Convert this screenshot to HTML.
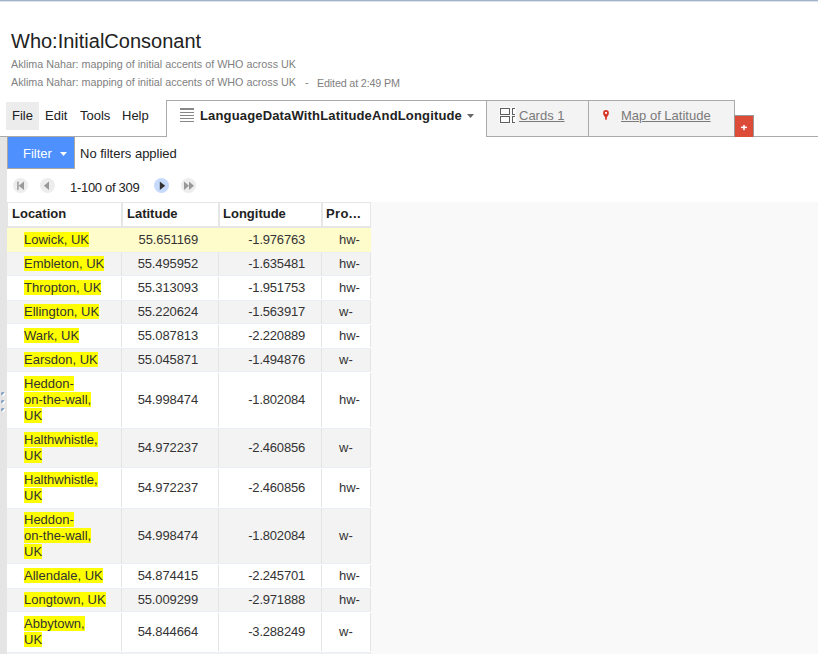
<!DOCTYPE html>
<html><head><meta charset="utf-8">
<style>
*{margin:0;padding:0;box-sizing:border-box}
html,body{width:818px;height:654px;overflow:hidden;background:#fff}
body{position:relative;font-family:"Liberation Sans",sans-serif;color:#222;font-size:13px}
.a{position:absolute;white-space:pre}
.topline{position:absolute;left:0;top:0;width:818px;height:2px;background:linear-gradient(#a3b4ca 0,#a3b4ca 1px,#dde3ea 1px)}
.title{left:11px;top:29px;font-size:20px;line-height:24px;color:#222}
.sub{left:11px;font-size:10.75px;line-height:14px;color:#7f7f7f}
.menu{top:102px;height:28px;line-height:28px;padding:0 6px;color:#222}
.tabline{position:absolute;left:0;top:136px;width:818px;height:1px;background:#aaa}
.tab{position:absolute;top:100px;height:37px;border:1px solid #aaa;background:#f3f3f3}
.lstrip{position:absolute;left:0;top:137px;width:7px;height:517px;background:#e5e5e5}
.filter{position:absolute;left:7px;top:137px;width:68px;height:32px;background:#4d90fe;border:1px solid #aca89f;border-top:none;border-radius:0 0 1px 1px}
.circ{position:absolute;top:177.5px;width:15px;height:15px;border-radius:50%;background:#ededed}
.grid{position:absolute;left:7px;top:202px;width:811px;height:452px;background:#f9f9f9}
.hdr{position:absolute;top:202px;height:26px;background:#fff;border-top:1px solid #e6e6e6;border-bottom:2px solid #e6e6e6}
.hc{position:absolute;top:0;height:23px;line-height:21px;font-weight:bold;color:#222;padding-left:4px;border-left:1px solid #e6e6e6;border-right:1px solid #e6e6e6}
.row{position:absolute;left:7px;width:364px}
.hl{position:absolute;left:0;right:0;height:1px;background:#e9eef7}
.c{position:absolute;top:0;bottom:0;color:#333;line-height:16px}
.bd{position:absolute;top:1px;bottom:1px;width:1px;background:#e4e4e4}
.loc{left:17px;width:96px}
.loc span{background:#ff0}
.lat{left:116px;width:95px;text-align:right;padding-right:20px;letter-spacing:-0.12px}
.lon{left:212px;width:102px;text-align:right;padding-right:16px;letter-spacing:-0.2px}
.pro{left:332px}
</style></head><body>
<div class="topline"></div>
<div class="a title">Who:InitialConsonant</div>
<div class="a sub" style="top:57px">Aklima Nahar: mapping of initial accents of WHO across UK</div>
<div class="a sub" style="top:75px">Aklima Nahar: mapping of initial accents of WHO across UK</div>
<div class="a sub" style="top:75px;left:305px">-</div>
<div class="a sub" style="top:75.5px;left:317px;letter-spacing:-0.16px">Edited at 2:49 PM</div>

<div class="a menu" style="left:6px;background:#ececec">File</div>
<div class="a menu" style="left:39px">Edit</div>
<div class="a menu" style="left:74px">Tools</div>
<div class="a menu" style="left:116px">Help</div>

<div class="tabline"></div>
<div class="tab" style="left:166px;width:321px;background:#fff;border-bottom:none"></div>
<svg class="a" style="left:180px;top:108px" width="14" height="14"><rect x="0" y="0" width="14" height="2" fill="#888"/><rect x="0" y="4" width="14" height="1" fill="#888"/><rect x="0" y="7" width="14" height="1" fill="#888"/><rect x="0" y="10" width="14" height="1" fill="#888"/><rect x="0" y="13" width="14" height="1" fill="#888"/></svg>
<div class="a" style="left:200px;top:108px;line-height:16px;font-weight:bold;color:#222;letter-spacing:0.16px">LanguageDataWithLatitudeAndLongitude</div>
<svg class="a" style="left:467px;top:114px" width="7" height="4"><path d="M0 0H7L3.5 4Z" fill="#666"/></svg>

<div class="tab" style="left:486px;width:103px"></div>
<svg class="a" style="left:499px;top:107px" width="17" height="17" shape-rendering="crispEdges"><g fill="#fafafa"><rect x="0" y="0" width="12" height="9"/><rect x="0" y="8" width="12" height="9"/><rect x="12" y="0" width="5" height="9"/><rect x="12" y="8" width="5" height="9"/><rect x="2" y="2" width="8" height="5" fill="#fff"/><rect x="2" y="10" width="8" height="5" fill="#fff"/><rect x="14" y="2" width="3" height="5" fill="#fff"/><rect x="14" y="10" width="3" height="5" fill="#fff"/></g><g fill="#5f5f5f"><rect x="1" y="1" width="10" height="1"/><rect x="1" y="7" width="10" height="1"/><rect x="1" y="1" width="1" height="7"/><rect x="10" y="1" width="1" height="7"/><rect x="1" y="9" width="10" height="1"/><rect x="1" y="15" width="10" height="1"/><rect x="1" y="9" width="1" height="7"/><rect x="10" y="9" width="1" height="7"/><rect x="13" y="1" width="3" height="1"/><rect x="13" y="7" width="3" height="1"/><rect x="13" y="1" width="1" height="7"/><rect x="13" y="9" width="3" height="1"/><rect x="13" y="15" width="3" height="1"/><rect x="13" y="9" width="1" height="7"/></g></svg>
<div class="a" style="left:519px;top:108px;line-height:16px;color:#7a7a7a;text-decoration:underline">Cards 1</div>

<div class="tab" style="left:588px;width:147px"></div>
<svg class="a" style="left:602px;top:109px" width="8" height="12"><path d="M4 0.9C1.9 0.9 1.1 2.2 1.1 3.9C1.1 5.6 2 6.8 3.1 8.3L3.2 10.8H4.8L4.9 8.3C6 6.8 6.9 5.6 6.9 3.9C6.9 2.2 6.1 0.9 4 0.9Z" fill="#d7372b"/><rect x="3.1" y="3" width="1.9" height="1.8" fill="#fff"/></svg>
<div class="a" style="left:621px;top:108px;line-height:16px;color:#7a7a7a;text-decoration:underline">Map of Latitude</div>

<div class="a" style="left:734px;top:115px;width:20px;height:22px;background:#dd4b39;border:1px solid #999;border-bottom:none"></div>
<svg class="a" style="left:741px;top:125px" width="6" height="6"><rect x="0" y="1.6" width="6" height="1.5" fill="#fff"/><rect x="2.2" y="0" width="1.6" height="5.2" fill="#fff"/></svg>

<div class="lstrip"></div>
<svg class="a" style="left:1px;top:392px" width="4" height="20"><defs><linearGradient id="dg" x1="0" y1="0" x2="1" y2="1"><stop offset="0" stop-color="#6f8fb8"/><stop offset="0.45" stop-color="#8aa3c4"/><stop offset="0.55" stop-color="#f4f6fb"/><stop offset="1" stop-color="#fff"/></linearGradient></defs><rect x="0" y="0" width="4" height="4" rx="1.5" fill="url(#dg)"/><rect x="0" y="8" width="4" height="4" rx="1.5" fill="url(#dg)"/><rect x="0" y="16" width="4" height="4" rx="1.5" fill="url(#dg)"/></svg>
<div class="filter"></div>
<div class="a" style="left:23px;top:146px;line-height:16px;color:#fff">Filter</div>
<svg class="a" style="left:60px;top:152px" width="7" height="4"><path d="M0 0H7L3.5 4Z" fill="#fff"/></svg>
<div class="a" style="left:80px;top:146px;line-height:16px;color:#222">No filters applied</div>

<div class="circ" style="left:13px"></div>
<svg class="a" style="left:13px;top:177.5px" width="15" height="15"><rect x="4.2" y="3.6" width="1.5" height="8.3" fill="#999"/><path d="M11 3.6V11.9L5.7 7.75Z" fill="#999"/></svg>
<div class="circ" style="left:40px"></div>
<svg class="a" style="left:40px;top:177.5px" width="15" height="15"><path d="M9 3.6V11.9L3.9 7.75Z" fill="#999"/></svg>
<div class="a" style="left:70px;top:180px;line-height:16px;color:#222;letter-spacing:-0.3px">1-100 of 309</div>
<div class="circ" style="left:154px;background:#c6dafc"></div>
<svg class="a" style="left:154px;top:177.5px" width="15" height="15"><path d="M5.8 3.6V11.9L11.2 7.75Z" fill="#333"/></svg>
<div class="circ" style="left:181px"></div>
<svg class="a" style="left:181px;top:177.5px" width="15" height="15"><path d="M3 3.6V11.9L8 7.75ZM8 3.6V11.9L13 7.75Z" fill="#999"/></svg>

<div class="grid"></div>
<div class="hdr" style="left:7px;width:364px">
  <div class="hc" style="left:0;width:115px">Location</div>
  <div class="hc" style="left:115px;width:98px">Latitude</div>
  <div class="hc" style="left:211px;width:104px">Longitude</div>
  <div class="hc" style="left:315px;width:49px;padding-left:3px;letter-spacing:0.4px">Pro...</div>
</div>
<!--ROWS--><div class="row" style="top:228px;height:24px;background:#fffccc"><div class="c loc" style="top:4px"><span>Lowick, UK</span></div><div class="c lat" style="top:4px">55.651169</div><div class="c lon" style="top:4px">-1.976763</div><div class="c pro" style="top:4px">hw-</div></div>
<div class="row" style="top:252px;height:24px;background:#f3f3f3"><i class="bd" style="left:114px"></i><i class="bd" style="left:211px"></i><i class="bd" style="left:314px"></i><i class="bd" style="left:363px"></i><i class="hl" style="top:0"></i><i class="hl" style="bottom:0"></i><div class="c loc" style="top:4px"><span>Embleton, UK</span></div><div class="c lat" style="top:4px">55.495952</div><div class="c lon" style="top:4px">-1.635481</div><div class="c pro" style="top:4px">hw-</div></div>
<div class="row" style="top:276px;height:24px;background:#fff"><i class="bd" style="left:114px"></i><i class="bd" style="left:211px"></i><i class="bd" style="left:314px"></i><i class="bd" style="left:363px"></i><div class="c loc" style="top:4px"><span>Thropton, UK</span></div><div class="c lat" style="top:4px">55.313093</div><div class="c lon" style="top:4px">-1.951753</div><div class="c pro" style="top:4px">hw-</div></div>
<div class="row" style="top:300px;height:24px;background:#f3f3f3"><i class="bd" style="left:114px"></i><i class="bd" style="left:211px"></i><i class="bd" style="left:314px"></i><i class="bd" style="left:363px"></i><i class="hl" style="top:0"></i><i class="hl" style="bottom:0"></i><div class="c loc" style="top:4px"><span>Ellington, UK</span></div><div class="c lat" style="top:4px">55.220624</div><div class="c lon" style="top:4px">-1.563917</div><div class="c pro" style="top:4px">w-</div></div>
<div class="row" style="top:324px;height:24px;background:#fff"><i class="bd" style="left:114px"></i><i class="bd" style="left:211px"></i><i class="bd" style="left:314px"></i><i class="bd" style="left:363px"></i><div class="c loc" style="top:4px"><span>Wark, UK</span></div><div class="c lat" style="top:4px">55.087813</div><div class="c lon" style="top:4px">-2.220889</div><div class="c pro" style="top:4px">hw-</div></div>
<div class="row" style="top:348px;height:24px;background:#f3f3f3"><i class="bd" style="left:114px"></i><i class="bd" style="left:211px"></i><i class="bd" style="left:314px"></i><i class="bd" style="left:363px"></i><i class="hl" style="top:0"></i><i class="hl" style="bottom:0"></i><div class="c loc" style="top:4px"><span>Earsdon, UK</span></div><div class="c lat" style="top:4px">55.045871</div><div class="c lon" style="top:4px">-1.494876</div><div class="c pro" style="top:4px">w-</div></div>
<div class="row" style="top:372px;height:56px;background:#fff"><i class="bd" style="left:114px"></i><i class="bd" style="left:211px"></i><i class="bd" style="left:314px"></i><i class="bd" style="left:363px"></i><div class="c loc" style="top:4px"><span>Heddon-</span><br><span>on-the-wall,</span><br><span>UK</span></div><div class="c lat" style="top:20px">54.998474</div><div class="c lon" style="top:20px">-1.802084</div><div class="c pro" style="top:20px">hw-</div></div>
<div class="row" style="top:428px;height:40px;background:#f3f3f3"><i class="bd" style="left:114px"></i><i class="bd" style="left:211px"></i><i class="bd" style="left:314px"></i><i class="bd" style="left:363px"></i><i class="hl" style="top:0"></i><i class="hl" style="bottom:0"></i><div class="c loc" style="top:4px"><span>Halthwhistle,</span><br><span>UK</span></div><div class="c lat" style="top:12px">54.972237</div><div class="c lon" style="top:12px">-2.460856</div><div class="c pro" style="top:12px">w-</div></div>
<div class="row" style="top:468px;height:40px;background:#fff"><i class="bd" style="left:114px"></i><i class="bd" style="left:211px"></i><i class="bd" style="left:314px"></i><i class="bd" style="left:363px"></i><div class="c loc" style="top:4px"><span>Halthwhistle,</span><br><span>UK</span></div><div class="c lat" style="top:12px">54.972237</div><div class="c lon" style="top:12px">-2.460856</div><div class="c pro" style="top:12px">hw-</div></div>
<div class="row" style="top:508px;height:56px;background:#f3f3f3"><i class="bd" style="left:114px"></i><i class="bd" style="left:211px"></i><i class="bd" style="left:314px"></i><i class="bd" style="left:363px"></i><i class="hl" style="top:0"></i><i class="hl" style="bottom:0"></i><div class="c loc" style="top:4px"><span>Heddon-</span><br><span>on-the-wall,</span><br><span>UK</span></div><div class="c lat" style="top:20px">54.998474</div><div class="c lon" style="top:20px">-1.802084</div><div class="c pro" style="top:20px">w-</div></div>
<div class="row" style="top:564px;height:24px;background:#fff"><i class="bd" style="left:114px"></i><i class="bd" style="left:211px"></i><i class="bd" style="left:314px"></i><i class="bd" style="left:363px"></i><div class="c loc" style="top:4px"><span>Allendale, UK</span></div><div class="c lat" style="top:4px">54.874415</div><div class="c lon" style="top:4px">-2.245701</div><div class="c pro" style="top:4px">hw-</div></div>
<div class="row" style="top:588px;height:24px;background:#f3f3f3"><i class="bd" style="left:114px"></i><i class="bd" style="left:211px"></i><i class="bd" style="left:314px"></i><i class="bd" style="left:363px"></i><i class="hl" style="top:0"></i><i class="hl" style="bottom:0"></i><div class="c loc" style="top:4px"><span>Longtown, UK</span></div><div class="c lat" style="top:4px">55.009299</div><div class="c lon" style="top:4px">-2.971888</div><div class="c pro" style="top:4px">hw-</div></div>
<div class="row" style="top:612px;height:40px;background:#fff"><i class="bd" style="left:114px"></i><i class="bd" style="left:211px"></i><i class="bd" style="left:314px"></i><i class="bd" style="left:363px"></i><div class="c loc" style="top:4px"><span>Abbytown,</span><br><span>UK</span></div><div class="c lat" style="top:12px">54.844664</div><div class="c lon" style="top:12px">-3.288249</div><div class="c pro" style="top:12px">w-</div></div>
<div class="row" style="top:652px;height:40px;background:#f3f3f3"><i class="bd" style="left:114px"></i><i class="bd" style="left:211px"></i><i class="bd" style="left:314px"></i><i class="bd" style="left:363px"></i><i class="hl" style="top:0"></i><i class="hl" style="bottom:0"></i><div class="c loc" style="top:4px"><span>Longhorsley,</span><br><span>UK</span></div><div class="c lat" style="top:12px">55.245</div><div class="c lon" style="top:12px">-1.766</div><div class="c pro" style="top:12px">hw-</div></div><!--/ROWS-->
</body></html>
